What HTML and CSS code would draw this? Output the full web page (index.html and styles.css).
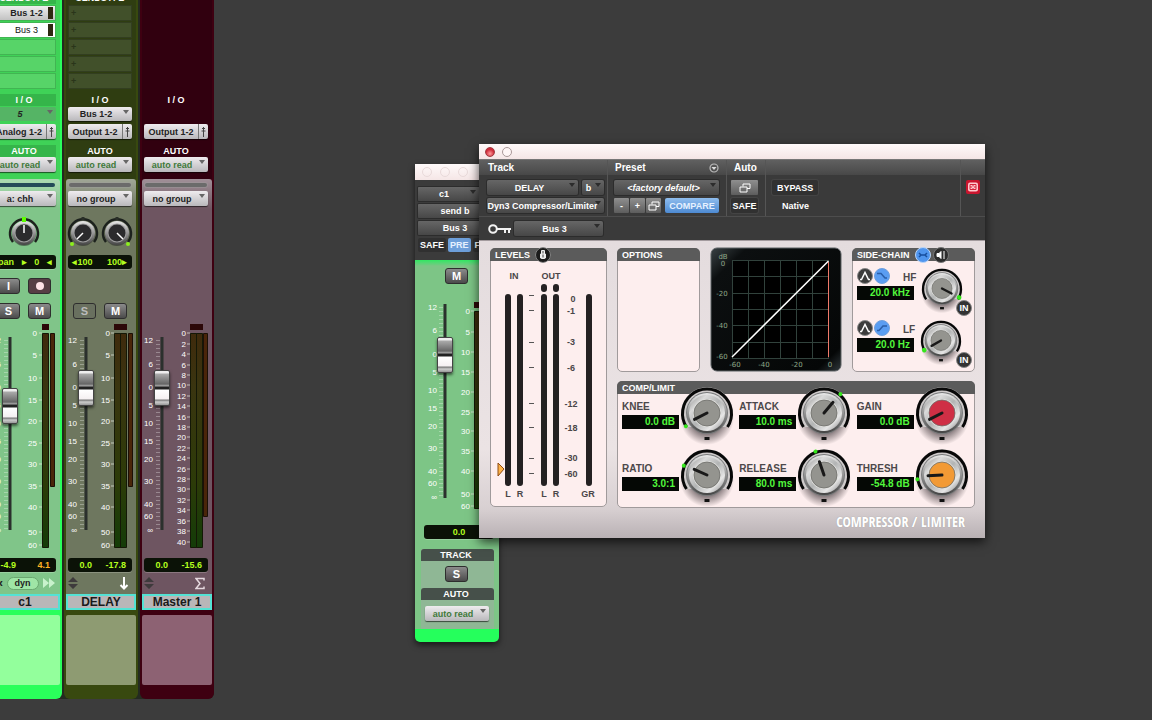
FILE: index.html
```html
<!DOCTYPE html>
<html lang="en">
<head>
<meta charset="utf-8">
<title>Mixer – Compressor / Limiter</title>
<link rel="stylesheet" href="styles.css">
</head>
<body>
<svg class="defs" aria-hidden="true">
  <defs>
    <linearGradient id="silver" x1="0" y1="0" x2="1" y2="1">
      <stop offset="0" stop-color="#8e8e8c"/><stop offset=".25" stop-color="#dadada"/><stop offset=".5" stop-color="#b2b4b4"/><stop offset=".75" stop-color="#e6e6e6"/><stop offset="1" stop-color="#7c7c7c"/>
    </linearGradient>
    <linearGradient id="rim" x1="0" y1="0" x2="0" y2="1">
      <stop offset="0" stop-color="#e8e8e8"/><stop offset="1" stop-color="#444"/>
    </linearGradient>
    <radialGradient id="cast"><stop offset=".6" stop-color="#3a3034" stop-opacity=".6"/><stop offset="1" stop-color="#3a3034" stop-opacity="0"/></radialGradient>
    <linearGradient id="gloss" x1="0" y1="0" x2="1" y2="1">
      <stop offset="0" stop-color="#3a4245"/><stop offset=".14" stop-color="#0c0f10"/><stop offset=".9" stop-color="#050707"/><stop offset="1" stop-color="#30383c"/>
    </linearGradient>
    <linearGradient id="meter" x1="0" y1="0" x2="0" y2="1">
      <stop offset="0" stop-color="#3f2a0c"/><stop offset=".25" stop-color="#3a3510"/><stop offset=".7" stop-color="#2c3b08"/><stop offset="1" stop-color="#143c08"/>
    </linearGradient>
    <symbol id="knob" viewBox="-27 -29 54 62" overflow="visible">
      <circle cy="5" r="27" fill="url(#cast)"/>
      <path d="M-22 14A26 26 0 1 1 22 14z" fill="#cfcbcb"/>
      <path d="M-20.500 14A24.500 24.500 0 1 1 20.500 14" fill="none" stroke="#080808" stroke-width="3"/>
      <circle r="21" fill="#77797a"/>
      <circle r="20" fill="url(#rim)"/>
      <circle r="18" fill="url(#silver)"/>
      <circle r="14" fill="#e2e2df"/>
      <circle r="13" fill="currentColor" stroke="#6d6d6a" stroke-width=".8"/>
      <path d="M-2.500 24h5v3h-5z" fill="#111"/>
    </symbol>
    <symbol id="pan" viewBox="-16 -16 32 32">
      <path d="M-11 9A14 14 0 1 1 11 9" fill="none" stroke="#1c211d" stroke-width="2.500"/>
      <circle r="12" cy="1" fill="#222" opacity=".5"/>
      <circle r="12" fill="url(#rim)"/>
      <circle r="9.500" fill="#9d9d9d"/>
      <circle r="8.500" fill="#2b2b2d"/>
      <path d="M-1.500-16h3v3h-3z" fill="#2a2f28"/>
    </symbol>
  </defs>
</svg>

<main class="desktop">

<section class="mixer" aria-label="Mixer">
  <article class="strip green">
    <div class="top">
      <h3 class="cap">SENDS A-E</h3>
      <div class="sends">
        <button class="send on">Bus 1-2<i></i></button>
        <button class="send on lit">Bus 3<i></i></button>
        <span class="send"></span><span class="send"></span><span class="send"></span>
      </div>
      <h3 class="cap io">I / O</h3>
      <div class="pick input flat"><select aria-label="Input"><option>5</option></select></div>
      <div class="output"><button class="plate">Analog 1-2</button><svg viewBox="0 0 9 15"><path d="M4.500 3v10M2.500 7h4M3 4.500h3" /></svg></div>
      <h3 class="cap auto">AUTO</h3>
      <div class="pick read"><select aria-label="Automation"><option>auto read</option></select></div>
    </div>
    <div class="panel">
      <div class="bar blue"></div>
      <div class="pick"><select aria-label="Group"><option>a: chh</option></select></div>
      <div class="pans">
        <svg viewBox="-16 -16 32 32"><use href="#pan" x="-16" y="-16" width="32" height="32"/><path d="M0 0v-8" stroke="#fff" stroke-width="1.500"/><path d="M-2-16h4v5h-4z" fill="#5dff00"/></svg>
      </div>
      <div class="led pan"><span>pan</span><span>▸</span><output>0</output><span>◂</span></div>
      <div class="keys"><button>I</button><button class="rec" aria-label="Record enable"><i></i></button></div>
      <div class="keys"><button>S</button><button>M</button></div>
      <div class="levels">
        <svg viewBox="0 0 74 232">
          <path class="mini" d="M18 20v190"/>
          <path class="slot" d="M22 17v193"/>
          <g class="num"><text x="13" y="23">12</text><text x="13" y="47">6</text><text x="13" y="70">0</text><text x="13" y="88">5</text><text x="13" y="106">10</text><text x="13" y="124">15</text><text x="13" y="142">20</text><text x="13" y="164">30</text><text x="13" y="187">40</text><text x="13" y="199">60</text><text x="13" y="213">∞</text></g>
          <g class="num"><text x="49" y="16">0</text><text x="49" y="38">5</text><text x="49" y="61">10</text><text x="49" y="83">15</text><text x="49" y="104">20</text><text x="49" y="126">25</text><text x="49" y="147">30</text><text x="49" y="169">35</text><text x="49" y="190">40</text><text x="49" y="215">50</text><text x="49" y="228">60</text></g>
          <path class="tick" d="M51 13h3M51 35h3M51 58h3M51 80h3M51 101h3M51 123h3M51 144h3M51 166h3M51 187h3M51 212h3M51 225h3"/>
          <path d="M54 4h7v6h-7z" fill="#2c0808"/>
          <path class="vu" d="M54.500 13.500h6v214h-6z"/>
          <path class="gr" d="M62.500 13.500h4v153h-4z"/>
        </svg>
        <input type="range" class="fader" aria-label="Volume" value="68">
      </div>
      <div class="led pair"><output>-4.9</output><output class="hot">4.1</output></div>
      <div class="foot"><span>‹</span><button class="dyn">dyn</button><svg class="ff" viewBox="0 0 14 12"><path d="M1 1l6 5-6 5zM7 1l6 5-6 5z"/></svg></div>
      <h2 class="name">c1</h2>
    </div>
    <div class="notes"></div>
  </article>

  <article class="strip olive">
    <div class="top">
      <h3 class="cap">SENDS A-E</h3>
      <div class="sends"><span class="send">+</span><span class="send">+</span><span class="send">+</span><span class="send">+</span><span class="send">+</span></div>
      <h3 class="cap io">I / O</h3>
      <div class="pick input"><select aria-label="Input"><option>Bus 1-2</option></select></div>
      <div class="output"><button class="plate">Output 1-2</button><svg viewBox="0 0 9 15"><path d="M4.500 3v10M2.500 7h4M3 4.500h3" /></svg></div>
      <h3 class="cap auto">AUTO</h3>
      <div class="pick read"><select aria-label="Automation"><option>auto read</option></select></div>
    </div>
    <div class="panel">
      <div class="bar"></div>
      <div class="pick"><select aria-label="Group"><option>no group</option></select></div>
      <div class="pans">
        <svg viewBox="-16 -16 32 32"><use href="#pan" x="-16" y="-16" width="32" height="32"/><path d="M0 0l-6 6" stroke="#fff" stroke-width="1.500"/><circle cx="-11" cy="11" r="2" fill="#8cf01c"/></svg>
        <svg viewBox="-16 -16 32 32"><use href="#pan" x="-16" y="-16" width="32" height="32"/><path d="M0 0l6 6" stroke="#fff" stroke-width="1.500"/><circle cx="11" cy="11" r="2" fill="#8cf01c"/></svg>
      </div>
      <div class="led pair tight"><output>◂100</output><output>100▸</output></div>
      <div class="keys"></div>
      <div class="keys"><button class="off">S</button><button>M</button></div>
      <div class="levels">
        <svg viewBox="0 0 74 232">
          <path class="mini" d="M18 20v190"/>
          <path class="slot" d="M22 17v193"/>
          <g class="num"><text x="13" y="23">12</text><text x="13" y="47">6</text><text x="13" y="70">0</text><text x="13" y="88">5</text><text x="13" y="106">10</text><text x="13" y="124">15</text><text x="13" y="142">20</text><text x="13" y="164">30</text><text x="13" y="187">40</text><text x="13" y="199">60</text><text x="13" y="213">∞</text></g>
          <g class="num"><text x="46" y="16">0</text><text x="46" y="38">5</text><text x="46" y="61">10</text><text x="46" y="83">15</text><text x="46" y="104">20</text><text x="46" y="126">25</text><text x="46" y="147">30</text><text x="46" y="169">35</text><text x="46" y="190">40</text><text x="46" y="215">50</text><text x="46" y="228">60</text></g>
          <path class="tick" d="M47 13h3M47 35h3M47 58h3M47 80h3M47 101h3M47 123h3M47 144h3M47 166h3M47 187h3M47 212h3M47 225h3"/>
          <path d="M50 4h13v6h-13z" fill="#2c0808"/>
          <path class="vu" d="M50.500 13.500h6v214h-6zM56.500 13.500h6v214h-6z"/>
          <path class="gr" d="M64.500 13.500h4v153h-4z"/>
        </svg>
        <input type="range" class="fader" aria-label="Volume" value="79">
      </div>
      <div class="led pair"><output>0.0</output><output>-17.8</output></div>
      <div class="foot"><svg class="ud" viewBox="0 0 10 12"><path d="M0 5l5-5 5 5zM0 7h10l-5 5z"/></svg><svg class="arrow" viewBox="0 0 10 13"><path d="M5 0v11M1.500 8L5 11.500 8.500 8"/></svg></div>
      <h2 class="name">DELAY</h2>
    </div>
    <div class="notes"></div>
  </article>

  <article class="strip wine">
    <div class="top">
      <h3 class="cap"></h3>
      <div class="sends"></div>
      <h3 class="cap io">I / O</h3>
      <div class="input"></div>
      <div class="output"><button class="plate">Output 1-2</button><svg viewBox="0 0 9 15"><path d="M4.500 3v10M2.500 7h4M3 4.500h3" /></svg></div>
      <h3 class="cap auto">AUTO</h3>
      <div class="pick read"><select aria-label="Automation"><option>auto read</option></select></div>
    </div>
    <div class="panel">
      <div class="bar"></div>
      <div class="pick"><select aria-label="Group"><option>no group</option></select></div>
      <div class="pans"></div>
      <div class="blank"></div>
      <div class="keys"></div>
      <div class="keys"></div>
      <div class="levels">
        <svg viewBox="0 0 74 232">
          <path class="mini" d="M18 20v190"/>
          <path class="slot" d="M22 17v193"/>
          <g class="num"><text x="13" y="23">12</text><text x="13" y="47">6</text><text x="13" y="70">0</text><text x="13" y="88">5</text><text x="13" y="106">10</text><text x="13" y="124">15</text><text x="13" y="142">20</text><text x="13" y="164">30</text><text x="13" y="187">40</text><text x="13" y="199">60</text><text x="13" y="213">∞</text></g>
          <g class="num"><text x="46" y="16">0</text><text x="46" y="27">2</text><text x="46" y="37">4</text><text x="46" y="48">6</text><text x="46" y="58">8</text><text x="46" y="68">10</text><text x="46" y="79">12</text><text x="46" y="89">14</text><text x="46" y="100">16</text><text x="46" y="110">18</text><text x="46" y="120">20</text><text x="46" y="131">22</text><text x="46" y="141">24</text><text x="46" y="152">26</text><text x="46" y="162">28</text><text x="46" y="172">30</text><text x="46" y="183">32</text><text x="46" y="193">34</text><text x="46" y="204">36</text><text x="46" y="214">38</text><text x="46" y="225">40</text></g>
          <path class="tick" d="M47 13h3M47 24h3M47 34h3M47 45h3M47 55h3M47 65h3M47 76h3M47 86h3M47 97h3M47 107h3M47 117h3M47 128h3M47 138h3M47 149h3M47 159h3M47 169h3M47 180h3M47 190h3M47 201h3M47 211h3M47 222h3"/>
          <path d="M50 4h13v6h-13z" fill="#2c0808"/>
          <path class="vu" d="M50.500 13.500h6v214h-6zM56.500 13.500h6v214h-6z"/>
          <path class="gr" d="M63.500 13.500h4v183h-4z"/>
        </svg>
        <input type="range" class="fader" aria-label="Volume" value="79">
      </div>
      <div class="led pair"><output>0.0</output><output>-15.6</output></div>
      <div class="foot"><svg class="ud" viewBox="0 0 10 12"><path d="M0 5l5-5 5 5zM0 7h10l-5 5z"/></svg><svg class="sum" viewBox="0 0 10 12"><path d="M9 3V1H1l4 5-4 5h8V9"/></svg></div>
      <h2 class="name">Master 1</h2>
    </div>
    <div class="notes"></div>
  </article>
</section>

<section class="sendwin" aria-label="Send b">
  <header class="titlebar"><i></i><i></i><i></i></header>
  <div class="route">
    <div class="pick dark"><select aria-label="Track"><option>c1</option></select></div>
    <button class="dbtn">send b</button>
    <button class="dbtn">Bus 3</button>
    <div class="modes"><button>SAFE</button><button class="blue">PRE</button><button>FMP</button></div>
  </div>
  <div class="sendbody">
    <button class="key">M</button>
    <div class="levels">
      <svg viewBox="0 0 84 220">
        <path class="mini" d="M26 7v190"/>
        <path class="slot" d="M30 4v194"/>
        <g class="num"><text x="22" y="10">12</text><text x="22" y="33">6</text><text x="22" y="57">0</text><text x="22" y="75">5</text><text x="22" y="93">10</text><text x="22" y="111">15</text><text x="22" y="129">20</text><text x="22" y="151">30</text><text x="22" y="174">40</text><text x="22" y="186">60</text><text x="22" y="200">∞</text></g>
        <g class="num"><text x="55" y="14">0</text><text x="55" y="35">5</text><text x="55" y="55">10</text><text x="55" y="75">15</text><text x="55" y="95">20</text><text x="55" y="115">25</text><text x="55" y="134">30</text><text x="55" y="154">35</text><text x="55" y="174">40</text><text x="55" y="197">50</text><text x="55" y="209">60</text></g>
        <path class="tick" d="M56 11h3M56 32h3M56 52h3M56 72h3M56 92h3M56 112h3M56 131h3M56 151h3M56 171h3M56 194h3M56 206h3"/>
        <path d="M59 2h11v6h-11z" fill="#2c0808"/>
        <path class="vu" d="M59.500 11.500h11v197h-11z"/>
      </svg>
      <input type="range" class="fader" aria-label="Send level" value="79">
    </div>
    <output class="led">0.0</output>
    <div class="trackbox">
      <h3>TRACK</h3>
      <button class="key">S</button>
      <h3>AUTO</h3>
      <div class="pick read"><select aria-label="Automation"><option>auto read</option></select></div>
    </div>
  </div>
</section>

<section class="plugin" aria-label="Compressor / Limiter">
  <header class="titlebar"><i class="close"></i><i class="min"></i></header>
  <div class="head">
    <div class="hcol">
      <h3>Track</h3>
      <div class="hbody">
        <div class="hrow"><div class="pick dark grow"><select aria-label="Track"><option>DELAY</option></select></div><div class="pick dark slotpick"><select aria-label="Insert"><option>b</option></select></div></div>
        <div class="hrow"><div class="pick dark grow"><select aria-label="Plug-in"><option>Dyn3 Compressor/Limiter</option></select></div></div>
      </div>
    </div>
    <div class="hcol">
      <h3>Preset<svg viewBox="0 0 10 10"><circle cx="5" cy="5" r="4" fill="none" stroke="#bbb" stroke-width="1.200"/><path d="M2.500 4h5L5 7z" fill="#ddd"/></svg></h3>
      <div class="hbody">
        <div class="hrow"><div class="pick dark grow ital"><select aria-label="Preset"><option>&lt;factory default&gt;</option></select></div></div>
        <div class="hrow tri"><div class="trio"><button class="light">-</button><button class="light">+</button><button class="light" aria-label="Copy settings"><svg viewBox="0 0 12 10"><path d="M4 3.500V1h7v4.500H8M1 4h7v5H1z"/></svg></button></div><button class="blue">COMPARE</button></div>
      </div>
    </div>
    <div class="hcol">
      <h3>Auto</h3>
      <div class="hbody">
        <div class="hrow"><button class="light grow" aria-label="Automation enable"><svg viewBox="0 0 12 10"><path d="M4 3.500V1h7v4.500H8M1 4h7v5H1z"/></svg></button></div>
        <div class="hrow"><button class="deep grow">SAFE</button></div>
      </div>
    </div>
    <div class="hcol">
      <h3></h3>
      <div class="hbody">
        <div class="hrow"><button class="deep">BYPASS</button></div>
        <div class="hrow"><span class="native">Native</span></div>
      </div>
    </div>
    <div class="hcol">
      <h3></h3>
      <div class="hbody">
        <button class="target" aria-label="Target"><svg viewBox="0 0 12 12"><rect x="1" y="1.500" width="10" height="9" rx="2" fill="#ffc9cf"/><path d="M3 3.500h6v5H3zM6 3v2.500M6 7v2M3 6h2M7 6h2" fill="none" stroke="#d5243c"/></svg></button>
      </div>
    </div>
  </div>
  <div class="keyrow">
    <svg viewBox="0 0 24 12"><circle cx="5" cy="6" r="3.800"/><path d="M9 6h14M17 6v4M21 6v4"/></svg>
    <div class="pick dark"><select aria-label="Key input"><option>Bus 3</option></select></div>
  </div>
  <div class="face">
    <section class="box lev">
      <h3>LEVELS<svg class="dot" viewBox="-8 -8 16 16"><circle r="7.500" fill="#1b1b1b" stroke="#888"/><path d="M-1.500-4.500h3v8h-3zM-2.500-1h5v4h-5z" fill="#999" stroke="#eee"/></svg></h3>
      <svg class="lv" viewBox="0 0 117 245">
        <g class="lab"><text x="24" y="18">IN</text><text x="61" y="18">OUT</text></g>
        <g class="pipe"><path d="M18 36v186M30 36v186M54 36v186M66 36v186M99 36v186M54 26v2M66 26v2"/></g>
        <path d="M39 34.500h5M39 49.500h5M39 81.500h5M39 106.500h5M39 142.500h5M39 166.500h5M39 197.500h5M39 212.500h5" stroke="#555" fill="none"/>
        <g class="lab"><text x="83" y="41">0</text><text x="81" y="53">-1</text><text x="81" y="84">-3</text><text x="81" y="110">-6</text><text x="81" y="146">-12</text><text x="81" y="170">-18</text><text x="81" y="200">-30</text><text x="81" y="216">-60</text>
        <text x="18" y="236">L</text><text x="30" y="236">R</text><text x="54" y="236">L</text><text x="66" y="236">R</text><text x="98" y="236">GR</text></g>
        <path d="M8 202l6 6-6 7z" fill="#ffb347" stroke="#8e4c14"/>
      </svg>
    </section>
    <div class="right">
      <div class="upper">
        <section class="box opt"><h3>OPTIONS</h3></section>
        <svg class="graph" viewBox="0 0 132 125">
          <rect x="1" y="1" width="130" height="123" rx="6" fill="url(#gloss)" stroke="#5d6265"/>
          <rect x="22" y="13" width="97" height="98" fill="#000"/>
          <path class="grid" d="M22.500 13v98M38.500 13v98M54.500 13v98M70.500 13v98M86.500 13v98M102.500 13v98M118.500 13v98M22 13.500h97M22 29.500h97M22 46.500h97M22 62.500h97M22 78.500h97M22 95.500h97M22 111.500h97"/>
          <path d="M118.500 15v95" stroke="#f0796a"/>
          <path d="M22 110L118.500 14" stroke="#fff" stroke-width="1.500"/>
          <g class="gl"><text x="13" y="12">dB</text><text x="13" y="19">0</text><text x="12" y="49">-20</text><text x="12" y="81">-40</text><text x="12" y="112">-60</text><text x="25" y="120">-60</text><text x="54" y="120">-40</text><text x="87" y="120">-20</text><text x="120" y="120">0</text></g>
        </svg>
        <section class="box sc">
          <h3>SIDE-CHAIN<button class="dot" aria-label="External key"><svg viewBox="-8 -8 16 16"><circle r="7.500" fill="#4f95ee" stroke="#b9d4f7"/><path d="M-4-2l2 2-2 2M4-2l-2 2 2 2M-2 0h4" stroke="#174e9e" fill="none" stroke-width="1.500"/></svg></button><button class="dot" aria-label="Key listen"><svg viewBox="-8 -8 16 16"><circle r="7.500" fill="#2c2c2c" stroke="#777"/><path d="M-4-1.500h2l2-2v7l-2-2h-2zM3-4v8" stroke="#fff" fill="#fff"/></svg></button></h3>
          <div class="scrow">
            <div class="col"><div class="types"><button class="dot" aria-label="Band"><svg viewBox="-8 -8 16 16"><circle r="7.500" fill="#3c3c3c" stroke="#888"/><path d="M-5 3.500h1.500L0-3.500 3.500 3.500H5" stroke="#fff" fill="none" stroke-width="1.500"/></svg></button><button class="dot" aria-label="Low pass"><svg viewBox="-8 -8 16 16"><circle r="7.500" fill="#5a9df2" stroke="#6f9fdc"/><path d="M-5-2.500h4L3 2h2" stroke="#2a5ea8" fill="none" stroke-width="1.500"/></svg></button><span class="band">HF</span></div><output>20.0 kHz</output></div>
            <svg class="sk" viewBox="-27 -29 54 62"><use href="#knob" x="-27" y="-29" width="54" height="62"/><path class="pt" d="M0 0v-14" transform="rotate(118)"/><circle class="g" r="3" transform="rotate(118) translate(0 -25)"/></svg>
            <button class="dot in">IN</button>
          </div>
          <div class="scrow">
            <div class="col"><div class="types"><button class="dot" aria-label="Band"><svg viewBox="-8 -8 16 16"><circle r="7.500" fill="#3c3c3c" stroke="#888"/><path d="M-5 3.500h1.500L0-3.500 3.500 3.500H5" stroke="#fff" fill="none" stroke-width="1.500"/></svg></button><button class="dot" aria-label="High pass"><svg viewBox="-8 -8 16 16"><circle r="7.500" fill="#5a9df2" stroke="#6f9fdc"/><path d="M-5 2.500h2L1-2h4" stroke="#2a5ea8" fill="none" stroke-width="1.500"/></svg></button><span class="band">LF</span></div><output>20.0 Hz</output></div>
            <svg class="sk" viewBox="-27 -29 54 62"><use href="#knob" x="-27" y="-29" width="54" height="62"/><path class="pt" d="M0 0v-14" transform="rotate(-120)"/><circle class="g" r="3" transform="rotate(-120) translate(0 -25)"/></svg>
            <button class="dot in">IN</button>
          </div>
        </section>
      </div>
      <section class="box comp">
        <h3>COMP/LIMIT</h3>
        <div class="params">
          <div class="param"><div><h4>KNEE</h4><output>0.0 dB</output></div><svg viewBox="-27 -29 54 62"><use href="#knob" x="-27" y="-29" width="54" height="62"/><path class="pt" d="M0 0v-14" transform="rotate(-117)"/><circle class="g" r="2" transform="rotate(-122) translate(0 -25)"/></svg></div>
          <div class="param"><div><h4>ATTACK</h4><output>10.0 ms</output></div><svg viewBox="-27 -29 54 62"><use href="#knob" x="-27" y="-29" width="54" height="62"/><path class="pt" d="M0 0v-14" transform="rotate(40)"/><circle class="g" r="2" transform="rotate(41) translate(0 -25)"/></svg></div>
          <div class="param red"><div><h4>GAIN</h4><output>0.0 dB</output></div><svg viewBox="-27 -29 54 62"><use href="#knob" x="-27" y="-29" width="54" height="62"/><path class="pt" d="M0 0v-14" transform="rotate(-117)"/></svg></div>
          <div class="param"><div><h4>RATIO</h4><output>3.0:1</output></div><svg viewBox="-27 -29 54 62"><use href="#knob" x="-27" y="-29" width="54" height="62"/><path class="pt" d="M0 0v-14" transform="rotate(-66)"/><circle class="g" r="2" transform="rotate(-68) translate(0 -25)"/></svg></div>
          <div class="param"><div><h4>RELEASE</h4><output>80.0 ms</output></div><svg viewBox="-27 -29 54 62"><use href="#knob" x="-27" y="-29" width="54" height="62"/><path class="pt" d="M0 0v-14" transform="rotate(-19)"/><circle class="g" r="2" transform="rotate(-20) translate(0 -25)"/></svg></div>
          <div class="param amber"><div><h4>THRESH</h4><output>-54.8 dB</output></div><svg viewBox="-27 -29 54 62"><use href="#knob" x="-27" y="-29" width="54" height="62"/><path class="pt" d="M0 0v-14" transform="rotate(-93)"/><circle class="g" r="2" transform="rotate(-100) translate(0 -25)"/></svg></div>
        </div>
      </section>
      <h1>COMPRESSOR / LIMITER</h1>
    </div>
  </div>
</section>

</main>
</body>
</html>
```

FILE: styles.css
```css
* { box-sizing: border-box; margin: 0; }
body { background: #3c3c3c; font: bold 9px/12px "Liberation Sans", Arial, sans-serif; color: #222; overflow: hidden; }
h1, h2, h3, h4, button, select { font: inherit; color: inherit; }
button, select { border: 0; padding: 0; border-radius: 2px; }
svg { display: block; }
.defs { position: absolute; width: 0; height: 0; }
.desktop { position: relative; min-height: 100vh; }

/* shared controls */
.pick { position: relative; height: 15px; border-radius: 2px; background: linear-gradient(#efecef, #b9b8bb); box-shadow: 0 1px 1px rgba(0,0,0,.6); }
.pick select { appearance: none; display: block; width: 100%; height: 100%; background: none; text-align: center; text-align-last: center; padding-right: 8px; outline: 0; }
.pick::after { content: ""; position: absolute; right: 3px; top: 3px; border: 3px solid transparent; border-top: 4px solid #666; border-bottom: 0; pointer-events: none; }
.read { color: #3f7a3a; }
.flat { background: #55b465; box-shadow: none; font-style: italic; }
.dark, .dbtn { background: linear-gradient(#666, #474747); color: #fff; box-shadow: 0 0 0 1px #2c2c2c; }
.dark::after { border-top-color: #2c2c2c; }
.led { display: block; height: 14px; line-height: 14px; border-radius: 3px; background: #0b1207; color: #b4ff1e; box-shadow: 0 1px 0 rgba(255,255,255,.2); }
.pair { display: grid; grid-template-columns: 1fr 1fr; text-align: right; padding: 0 6px 0 0; }
.pair output:first-child { padding-right: 5px; }
.tight { padding-right: 5px; }
.hot { color: #ffb324; }
.keys button, .key { width: 23px; height: 16px; font-size: 11px; line-height: 14px; color: #fff; background: linear-gradient(#8b8b8b, #4b4b4b); border: 1px solid #2e2e2e; border-radius: 3px; }

/* mixer strips */
.mixer { position: absolute; left: -12px; top: -8px; display: grid; grid-template-columns: repeat(3, 74px); gap: 2px; background: #242a20; border-radius: 0 0 6px 6px; }
.strip { border-radius: 0 0 6px 6px; overflow: hidden; padding: 0 2px 14px 2px; }
.green { background: #2aff5b; --panel: #80c589; --note: #93ff9c; --top: #3fd257; --head: #35b54a; }
.olive { background: #38490f; --panel: #6e775f; --note: #8e9b72; --top: #2f3d11; --head: #2f3d11; }
.wine { background: #3e0011; --panel: #6e5561; --note: #8d6273; --top: #31000f; --head: #31000f; }
.top { background: var(--top); padding: 0 4px 7px 2px; }
.cap { height: 12px; color: #fff; text-align: center; background: var(--head); }
.sends { display: grid; grid-template-rows: repeat(5, 16px); gap: 1px; height: 84px; margin: 1px 0 5px; }
.send { display: flex; align-items: center; border: 1px solid rgba(0,0,0,.22); background: rgba(130,150,130,.22); color: #2a351a; padding-left: 2px; }
.green .send { border-color: #41b552; background: #57d468; }
.green .on { position: relative; justify-content: center; background: linear-gradient(#eee, #c2c2c2); color: #222; border-radius: 0; padding-left: 5px; }
.green .lit { background: #fff; font-weight: normal; color: #111; }
.send i { position: absolute; right: 2px; top: 1px; width: 5px; height: 12px; background: #2f2a12; }
.input { height: 14px; margin: 1px 0 3px; }
.output { display: flex; height: 15px; background: linear-gradient(#efecef, #b9b8bb); border-radius: 2px; margin-bottom: 6px; box-shadow: 0 1px 1px rgba(0,0,0,.6); }
.output .plate { flex: 1; background: none; border-right: 1px solid #777; border-radius: 0; white-space: nowrap; }
.output svg { width: 9px; height: 15px; fill: none; stroke: #444; }
.panel { background: linear-gradient(rgba(255,255,255,.35), transparent 30px) var(--panel); border-radius: 3px 3px 0 0; padding: 4px 4px 0 2px; }
.bar { height: 4px; border-radius: 2px; margin: 0 1px 4px; background: #6b6b6b; box-shadow: 0 0 0 1px rgba(160,160,160,.4); }
.bar.blue { background: #244a58; box-shadow: none; }
.pans { display: flex; justify-content: center; gap: 2px; height: 49px; padding-top: 11px; }
.pans svg { width: 32px; height: 32px; flex: none; }
.pan { display: flex; justify-content: space-between; padding: 0 4px 0 6px; }
.blank { height: 14px; }
.keys { display: flex; gap: 8px; height: 16px; margin-top: 9px; padding-left: 5px; }
.keys .off { color: #bbb; background: #69705f; }
.keys .rec { background: #573d44; display: grid; place-items: center; }
.rec i { width: 8px; height: 8px; border-radius: 50%; background: #ffe0e6; }
.levels { display: grid; margin: 1px -6px 0 -4px; }
.levels > * { grid-area: 1 / 1; }
.levels svg { width: 100%; }
.fader { writing-mode: vertical-lr; direction: rtl; appearance: none; background: none; width: 16px; height: 194px; margin: 17px 0 0 14px; }
.fader::-webkit-slider-runnable-track { width: 16px; background: none; }
.fader::-webkit-slider-thumb { appearance: none; width: 16px; height: 36px; border: 1px solid #444; border-radius: 2px; box-shadow: 0 2px 3px rgba(0,0,0,.55);
  background: linear-gradient(#eee 0 2px, #aaa 3px, #666 13px, #aaa 15px, #222 16px, #222 18px, #fff 19px, #f5f0f2 28px, #777 29px, #ccc 31px, #999 34px); }
.slot { fill: none; stroke: #2b302d; stroke-width: 3; }
.mini { fill: none; stroke: #fff; stroke-opacity: .3; stroke-width: 4; stroke-dasharray: 1 3; }
.num text { font: 8px "Liberation Sans", sans-serif; fill: #fff; text-anchor: end; }
.tick { stroke: #e8ece4; stroke-opacity: .7; fill: none; }
.vu { fill: url(#meter); stroke: #141806; }
.gr { fill: #4a2509; stroke: #1c1006; }
.panel > .led.pair { margin-top: 6px; }
.panel > .led.tight { margin-top: 0; }
.foot { display: flex; align-items: center; justify-content: space-between; height: 22px; padding: 0 3px 0 0; }
.green .foot { padding: 0 0 0 7px; }
.foot span { font-size: 12px; }
.dyn { width: 32px; height: 13px; border-radius: 7px; background: #9fe5a6; border: 1px solid #6aa870; line-height: 10px; }
.ff { width: 14px; height: 12px; fill: #c8f2cc; }
.ud { width: 10px; height: 12px; fill: #3e3a3c; }
.arrow, .sum { width: 10px; height: 13px; fill: none; stroke: #fff; stroke-width: 2; }
.sum { stroke: #e5d8de; stroke-width: 1.500; }
.name { height: 16px; margin: 0 -4px 0 -2px; border: 2px solid #54e2d4; background: #b9b6b8; text-align: center; font-size: 12px; line-height: 12px; color: #1a1a1a; }
.notes { height: 70px; margin-top: 5px; background: var(--note); border-radius: 2px; }

/* floating windows */
.titlebar { display: flex; align-items: center; background: linear-gradient(#fffafa, #f5e6e6); }
.titlebar i { width: 10px; height: 10px; border: 1px solid #e9dada; border-radius: 50%; }
.blue { background: linear-gradient(#8fbdee, #4d8ad2); color: #e6f1ff; }
.sendwin { position: absolute; left: 415px; top: 164px; width: 84px; border-radius: 0 0 5px 5px; overflow: hidden; background: #25ff5c; box-shadow: 0 3px 6px rgba(0,0,0,.6); padding-bottom: 13px; }
.sendwin .titlebar { height: 16px; gap: 8px; padding-left: 7px; }
.route { display: grid; gap: 3px; padding: 7px 3px 8px; background: #3b3b3b; }
.route .pick, .dbtn { height: 14px; border-radius: 1px; }
.route .pick select { padding-right: 26px; }
.route .pick::after { right: 20px; }
.dbtn { padding-right: 4px; }
.modes { display: flex; gap: 2px; height: 14px; color: #fff; }
.modes button { background: #303030; padding: 0 2px; }
.modes .blue { background: #6d9fda; }
.sendbody { background: linear-gradient(#31e862, #7dc586 6px); padding: 8px 5px 0 6px; }
.key { display: block; margin: 0 auto 16px; }
.sendbody > .key { margin-left: 24px; }
.sendbody .levels { margin: 0 -5px 0 -6px; }
.sendbody .fader { margin: 4px 0 0 22px; }
.sendbody > .led { margin: 5px 0 10px 3px; text-align: center; }
.trackbox { background: #8fb795; padding-bottom: 8px; }
.trackbox h3 { height: 12px; background: #46504a; color: #fff; text-align: center; border-radius: 3px 3px 0 0; padding-right: 3px; }
.trackbox .key { margin: 5px 0 6px 24px; }
.trackbox .pick { width: 64px; margin: 6px 0 0 4px; }

.plugin { position: absolute; left: 479px; top: 144px; width: 506px; background: #3a3a3a; box-shadow: 0 4px 10px rgba(0,0,0,.7); }
.plugin .titlebar { height: 16px; gap: 7px; padding-left: 6px; border-bottom: 1px solid #777; }
.plugin .close { background: radial-gradient(circle at 50% 70%, #ff9a9a, #cf2b3a 60%); border-color: #a03a40; }
.plugin .min { background: #fff6f6; border-color: #a99; }
.head { display: grid; grid-template-columns: 129px 119px 39px 1fr 24px; border-bottom: 1px solid #4d4d4d; }
.hcol { border-right: 1px solid #555; }
.hcol:last-child { border-right: 0; }
.hcol h3 { height: 15px; padding: 1px 7px 0 9px; display: flex; align-items: center; justify-content: space-between; font-size: 10px; color: #fff; background: linear-gradient(#606060, #484848); }
.hcol h3 svg { width: 10px; height: 10px; }
.hbody { display: grid; gap: 3px; padding: 5px 3px 3px 8px; }
.hcol:nth-child(n+2) .hbody { padding: 5px 7px 3px 6px; }
.hcol:nth-child(n+3) .hbody { padding-left: 4px; }
.hcol:nth-child(n+2) h3 { padding-left: 7px; }
.hrow { display: flex; gap: 4px; height: 15px; color: #fff; }
.grow { flex: 1; }
.hrow .pick select { padding-right: 6px; }
.slotpick { width: 22px; }
.hrow .slotpick select { padding-right: 9px; }
.ital { font-style: italic; }
.trio { display: flex; gap: 1px; }
.trio .light { width: 15px; }
.light { background: linear-gradient(#8f8f8f, #5d5d5d); border-radius: 1px; display: grid; place-items: center; }
.light svg { width: 12px; height: 10px; fill: none; stroke: #fff; }
.hrow .blue { flex: 1; border-radius: 2px; }
.deep { background: #313131; padding: 0 5px; box-shadow: 0 0 0 1px #444; }
.hcol:nth-child(4) .hbody { padding-left: 6px; }
.grow.deep { padding: 0; }
.native { padding: 2px 10px; }
.hcol:last-child .hbody { padding: 5px 5px 3px; }
.target { width: 14px; height: 14px; background: #c9152e; display: grid; place-items: center; }
.target svg { width: 12px; height: 12px; }
.keyrow { display: flex; align-items: center; gap: 2px; height: 23px; padding: 0 0 0 9px; }
.keyrow svg { width: 24px; height: 12px; fill: none; stroke: #f2f2f2; stroke-width: 2; }
.keyrow .pick { width: 89px; }
.face { display: grid; grid-template-columns: 117px 1fr; gap: 10px; padding: 7px 10px 6px 11px; border-top: 1px solid #a39b9e; background: linear-gradient(#e4dcde, #ebe3e4 70%, #d8d0d2 90%, #b9b1b4); }
.box { background: #fdeeee; border: 1px solid #a09a9b; border-radius: 5px; }
.box h3 { height: 13px; margin: -1px -1px 0; padding-left: 5px; background: #5b5b5b; color: #fff; border-radius: 5px 5px 0 0; display: flex; align-items: center; }
.box h3 .dot { flex: none; margin-left: 5px; }
.dot { display: block; width: 16px; height: 16px; border-radius: 50%; background: none; }
.lev { align-self: start; }
.lev .lv { width: calc(100% + 2px); margin: 0 -1px; }
.lab text { font: bold 9px "Liberation Sans", sans-serif; fill: #4a4648; text-anchor: middle; }
.pipe path { fill: none; stroke: #242122; stroke-width: 6; stroke-linecap: round; }
.upper { display: grid; grid-template-columns: 83px 132px 1fr; gap: 10px; height: 124px; margin-bottom: 9px; }
.graph { width: 132px; height: 125px; margin-top: -1px; }
.grid { stroke: #31423c; fill: none; }
.gl text { font: 7px "DejaVu Sans", sans-serif; fill: #8fa889; text-anchor: middle; }
.sc h3 .dot + .dot { margin-left: 2px; }
.scrow { position: relative; display: flex; gap: 5px; height: 52px; padding: 5px 0 0 4px; }
.scrow .col { padding-top: 2px; }
.types { display: flex; gap: 1px; align-items: end; }
.band { margin-left: 12px; font-size: 10px; color: #4c484a; }
.box output { display: block; width: 57px; height: 14px; margin-top: 2px; padding-right: 4px; background: #050805; color: #52f83c; font-size: 10px; line-height: 14px; text-align: right; }
.sk { width: 42px; height: 48px; color: #94948f; overflow: visible; }
.in { position: absolute; right: 2px; top: 39px; background: #333; color: #fff; border: 1px solid #888; line-height: 12px; }
.pt { stroke: #191919; stroke-width: 3; stroke-linecap: round; }
.g { fill: #35e61c; }
.params { display: grid; grid-template-columns: repeat(3, 1fr); grid-template-rows: 62px 61px; margin-top: -10px; padding-left: 4px; }
.param { display: flex; gap: 1px; color: #94948f; }
.param > div { padding-top: 17px; }
.param h4 { font-size: 10px; color: #4c484a; }
.param svg { width: 54px; height: 62px; overflow: visible; flex: none; }
.red { color: #cf2f45; }
.amber { color: #f29a35; }
.plugin h1 { font: bold 14px/20px "Open Sans Condensed", "Liberation Sans Narrow", "Liberation Sans", sans-serif; color: #fff; text-align: right; margin: 4px 10px 0 0; text-shadow: 0 0 1px #999; }
```
